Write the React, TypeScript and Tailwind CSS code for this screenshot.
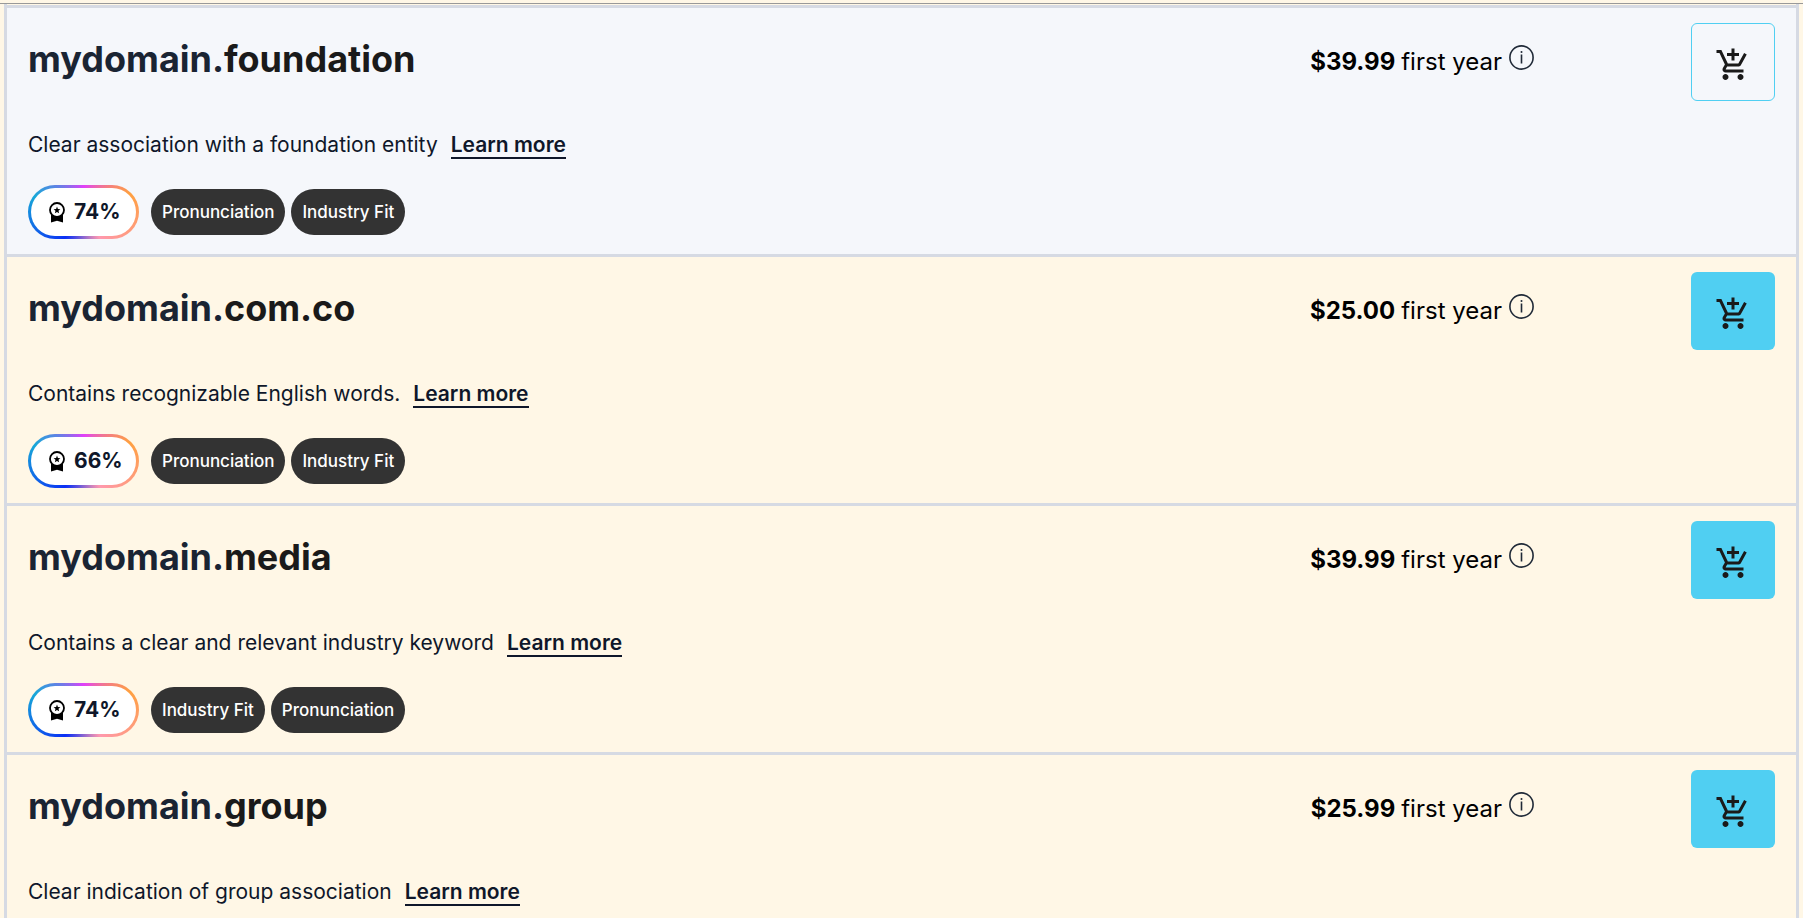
import React from "react";
import {MdAddShoppingCart} from "react-icons/md";

type Domain = {
    tld: string
    price: string
    reason: string
    score?: number
    tags?: string[]
    highlighted?: boolean
}

const domains: Domain[] = [
    {tld: 'foundation', price: '$39.99', reason: 'Clear association with a foundation entity', score: 74, tags: ['Pronunciation', 'Industry Fit'], highlighted: true},
    {tld: 'com.co', price: '$25.00', reason: 'Contains recognizable English words.', score: 66, tags: ['Pronunciation', 'Industry Fit']},
    {tld: 'media', price: '$39.99', reason: 'Contains a clear and relevant industry keyword', score: 74, tags: ['Industry Fit', 'Pronunciation']},
    {tld: 'group', price: '$25.99', reason: 'Clear indication of group association'},
]

function BadgeIcon() {
    return <svg width="16" height="21" viewBox="0 0 16 21" aria-hidden="true">
        <path d="M2 12 L2 20.6 L8 18.8 L14 20.6 L14 12 Z" fill="#000"/>
        <circle cx="8" cy="8" r="7" fill="#fff" stroke="#000" strokeWidth="1.8"/>
        <path d="M8 4.6 L8.9 7.1 L11.4 7.2 L9.5 8.8 L10.1 11.2 L8 9.9 L5.9 11.2 L6.5 8.8 L4.6 7.2 L7.1 7.1 Z" fill="#000"/>
    </svg>
}

function InfoIcon() {
    return <svg width="25" height="25" viewBox="0 0 25 25" fill="none" stroke="#1f2937" aria-hidden="true">
        <circle cx="12.5" cy="12.5" r="11.6" strokeWidth="1.6"/>
        <path d="M12.5 9.5 V18.5" strokeWidth="1.6"/>
        <circle cx="12.5" cy="7" r="1" fill="#1f2937" stroke="none"/>
    </svg>
}

function Score({value, tags}: { value: number, tags: string[] }) {
    return <div className="mt-6 flex items-center">
        <div
            className="flex h-[54px] w-[111px] items-center gap-[9px] rounded-full border-3 border-transparent pl-[18px] text-[21px] font-bold text-[#0f172a] [background:linear-gradient(#fff,#fff)_padding-box,conic-gradient(from_0deg,#e040fb,#ffa040_19%,#ff98b0_41%,#0a2ff5_60%,#18a8d8_80%,#e040fb)_border-box]">
            <BadgeIcon/>
            {value}%
        </div>
        <ul className="ml-3 flex gap-1.5">
            {tags.map((tag) => (
                <li key={tag}
                    className="rounded-full bg-[#333] px-[11px] text-[17px] leading-[46px] font-medium text-white">{tag}</li>
            ))}
        </ul>
    </div>
}

function DomainRow({domain}: { domain: Domain }) {
    return <li
        className={`border-t-3 border-[#d6dae3] px-[21px] py-[15px] ${domain.highlighted ? 'bg-[#f5f7fb]' : 'bg-[#fff7e6]'}`}>
        <div className="flex items-start">
            <h2 className="flex-1 pt-3.5 text-4xl leading-11 font-bold text-[#1a1a1a]">
                <span className="text-[#1a2433]">mydomain.</span>{domain.tld}
            </h2>
            <div className="flex items-start pt-[22px]">
                <p className="flex items-baseline gap-1.5 pt-[3px] text-2xl leading-7 text-black">
                    <strong className="font-bold">{domain.price}</strong>
                    <span>first year</span>
                </p>
                <button className="ml-[7px]" aria-label="Price details">
                    <InfoIcon/>
                </button>
            </div>
            <button
                aria-label="Add to cart"
                className={`ml-[157px] flex h-[78px] w-[84px] items-center justify-center rounded-md pt-1.5 text-[#1a1a1a] ${domain.highlighted ? 'border border-[#50cff2]' : 'bg-[#50cff2]'}`}>
                <MdAddShoppingCart size={36}/>
            </button>
        </div>
        <p className="mt-7 text-[21px] leading-8 text-[#0f172a]">
            {domain.reason}
            <a href="#" className="ml-[13px] border-b-2 border-[#0f172a] font-semibold">Learn more</a>
        </p>
        {domain.score && domain.tags && <Score value={domain.score} tags={domain.tags}/>}
    </li>
}

export default function App() {
    return <main className="flex min-h-screen flex-col bg-[#fff7e6] pt-[3px] font-[Inter,sans-serif]">
        <div className="border-t border-[#999]"/>
        <ul className="mx-1 flex-1 border-x-3 border-[#d6dae3] pt-px">
            {domains.map((domain) => <DomainRow key={domain.tld} domain={domain}/>)}
        </ul>
    </main>
}
